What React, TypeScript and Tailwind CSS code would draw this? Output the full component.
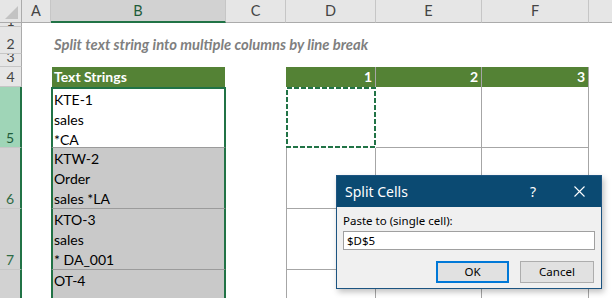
import React from "react";

const cellFont = { fontFamily: "Lato, 'Liberation Sans', sans-serif" };

function ColHead({ label, selected, last }: { label: string; selected?: boolean; last?: boolean }) {
  return (
    <div
      className={
        "flex items-center justify-center text-[14.5px] " +
        (selected
          ? "bg-[#d2d2d2] border-b-2 border-b-[#217346] text-[#1f5c3a] border-r border-r-[#c6c6c6]"
          : "bg-[#e6e6e6] border-b border-b-[#ababab] text-[#444] " + (last ? "" : "border-r border-r-[#c6c6c6]"))
      }
    >
      <span className="leading-none pt-[1px]">{label}</span>
    </div>
  );
}

function RowHead({ n, kind, tiny }: { n: string; kind: "plain" | "sel5" | "sel"; tiny?: boolean }) {
  const cls =
    kind === "plain"
      ? "bg-[#e6e6e6] border-r border-r-[#ababab] text-[#444]"
      : kind === "sel5"
      ? "bg-[#9fd5b7] border-r-2 border-r-[#217346] text-[#1f5c3a]"
      : "bg-[#d2d2d2] border-r-2 border-r-[#217346] text-[#2f6b45]";
  return (
    <div
      className={
        "flex justify-center overflow-hidden border-b border-b-[#c6c6c6] text-[14px] " +
        (tiny ? "items-start " : "items-end ") +
        cls
      }
    >
      <span className={tiny ? "leading-[16px] mt-[-10px]" : "leading-[16px] pb-[1px]"}>{n}</span>
    </div>
  );
}

function TextCell({ lines, white, top, last }: { lines: string[]; white?: boolean; top?: boolean; last?: boolean }) {
  return (
    <div
      className={
        "flex flex-col overflow-hidden border-l-2 border-r-2 border-l-[#217346] border-r-[#217346] pl-[1px] pt-[1px] text-[14px] text-black " +
        (white ? "bg-white " : "bg-[#c9c9c9] ") +
        (top ? "border-t-2 border-t-[#217346] " : "") +
        (last ? "" : "border-b border-b-[#9b9b9b]")
      }
      style={cellFont}
    >
      {lines.map((l, i) => (
        <div key={i} className="leading-[20px] h-[20px] whitespace-nowrap">
          {l}
        </div>
      ))}
    </div>
  );
}

function TableCell({ first, last }: { first?: boolean; last?: boolean }) {
  return (
    <div
      className={
        "bg-white border-r border-r-[#a6a6a6] " +
        (first ? "border-l border-l-[#a6a6a6] " : "") +
        (last ? "" : "border-b border-b-[#a6a6a6]")
      }
    />
  );
}

export default function App() {
  return (
    <div className="relative w-[612px] h-[298px] overflow-hidden bg-white" style={cellFont}>
      <div className="grid grid-cols-[22px_29px_175px_60px_90px_106px_107px_23px] grid-rows-[23px_4px_27px_13px_20px_61px_61px_61px_50px]">
        {/* header row */}
        <div className="relative bg-[#e6e6e6] border-b border-b-[#ababab] border-r border-r-[#ababab]">
          <svg className="absolute right-[3px] bottom-[3px]" width="13" height="13" viewBox="0 0 13 13">
            <polygon points="13,0 13,13 0,13" fill="#c3c3c3" />
          </svg>
        </div>
        <ColHead label="A" />
        <ColHead label="B" selected />
        <ColHead label="C" />
        <ColHead label="D" />
        <ColHead label="E" />
        <ColHead label="F" />
        <ColHead label="" last />

        {/* row 1 */}
        <RowHead n="1" kind="plain" tiny />
        <div className="col-span-7" />

        {/* row 2 */}
        <RowHead n="2" kind="plain" />
        <div />
        <div className="col-span-6 flex items-center pl-[3px] pt-[8px]">
          <span
            className="whitespace-nowrap text-[14.8px] font-bold italic text-[#7f7f7f] leading-none"
            style={{ fontFamily: "Lato, 'Liberation Sans', sans-serif" }}
          >
            Split text string into multiple columns by line break
          </span>
        </div>

        {/* row 3 */}
        <RowHead n="3" kind="plain" />
        <div className="col-span-7" />

        {/* row 4 */}
        <RowHead n="4" kind="plain" />
        <div />
        <div className="bg-[#548235] ml-[1px] mr-[1px] flex items-center pl-[2px] text-white font-bold text-[14px] leading-none">
          Text Strings
        </div>
        <div />
        <div className="bg-[#548235] border-r border-r-[#a6a6a6] flex items-center justify-end pr-[3px] text-white font-bold text-[14px] leading-none">
          1
        </div>
        <div className="bg-[#548235] border-r border-r-[#a6a6a6] flex items-center justify-end pr-[3px] text-white font-bold text-[14px] leading-none">
          2
        </div>
        <div className="bg-[#548235] border-r border-r-[#a6a6a6] flex items-center justify-end pr-[3px] text-white font-bold text-[14px] leading-none">
          3
        </div>
        <div />

        {/* row 5 */}
        <RowHead n="5" kind="sel5" />
        <div />
        <TextCell lines={["KTE-1", "sales", "*CA"]} white top />
        <div />
        <div className="relative bg-white">
          <svg className="absolute inset-0" width="90" height="61" viewBox="0 0 90 61">
            <rect x="1" y="1" width="88" height="59" fill="none" stroke="#217346" strokeWidth="2" strokeDasharray="5 2" />
          </svg>
        </div>
        <TableCell />
        <TableCell />
        <div />

        {/* row 6 */}
        <RowHead n="6" kind="sel" />
        <div />
        <TextCell lines={["KTW-2", "Order", "sales *LA"]} />
        <div />
        <TableCell first />
        <TableCell />
        <TableCell />
        <div />

        {/* row 7 */}
        <RowHead n="7" kind="sel" />
        <div />
        <TextCell lines={["KTO-3", "sales", "* DA_001"]} />
        <div />
        <TableCell first />
        <TableCell />
        <TableCell />
        <div />

        {/* row 8 */}
        <RowHead n="8" kind="sel" />
        <div />
        <TextCell lines={["OT-4", ""]} last />
        <div />
        <TableCell first last />
        <TableCell last />
        <TableCell last />
        <div />
      </div>

      {/* dialog */}
      <div
        className="absolute left-[336px] top-[175px] w-[266px] h-[114px] flex flex-col border border-[#1c5481] bg-[#f0f0f0] shadow-[2px_3px_6px_rgba(0,0,0,0.25)]"
        style={{ fontFamily: "'Noto Sans', 'Open Sans', sans-serif" }}
      >
        <div className="h-[31px] bg-[#0b4a72] flex items-center pl-[8px] pr-[16px] text-white text-[14px]">
          <span className="flex-1">Split Cells</span>
          <span className="text-[14px] mr-[38px]">?</span>
          <svg width="11" height="11" viewBox="0 0 11 11">
            <path d="M0.5 0.5 L10.5 10.5 M10.5 0.5 L0.5 10.5" stroke="white" strokeWidth="1.1" />
          </svg>
        </div>
        <div className="flex flex-col px-[6px] pt-[6px]">
          <div className="text-[11.5px] leading-[16px] text-black">Paste to (single cell):</div>
          <div className="mt-[2px] h-[19px] bg-white border border-[#a0a0a0] flex items-center pl-[3px] text-[11.5px] text-black">
            $D$5
          </div>
          <div className="mt-[11px] flex justify-end gap-[11px] pr-[1px]">
            <div className="w-[73px] h-[22px] border-2 border-[#0078d7] bg-[#e1e1e1] flex items-center justify-center text-[11.5px] text-black">
              OK
            </div>
            <div className="w-[74px] h-[22px] border border-[#adadad] bg-[#e1e1e1] flex items-center justify-center text-[11.5px] text-black">
              Cancel
            </div>
          </div>
        </div>
      </div>
    </div>
  );
}
